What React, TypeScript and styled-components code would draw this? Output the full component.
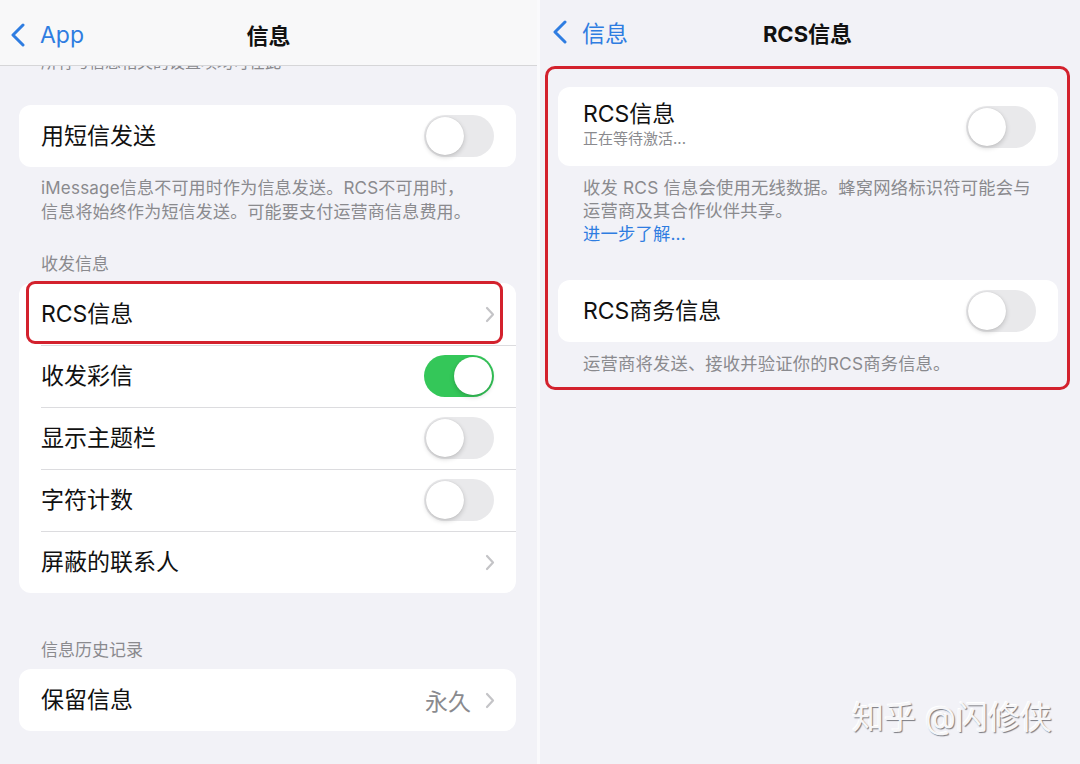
import React from 'react';
import styled, { createGlobalStyle } from 'styled-components';

const color = {
    bg: '#f2f2f7',
    card: '#ffffff',
    text: '#111111',
    gray: '#8a8a8e',
    blue: '#2f7de1',
    red: '#d3212d',
    green: '#34c759',
    track: '#e9e9eb',
    line: '#dcdcdf',
    chevron: '#c4c4c7',
};

const font = `"Inter", "Noto Sans CJK SC", "Noto Sans", sans-serif`;

const GlobalStyle = createGlobalStyle`
    html, body {
        margin: 0;
        padding: 0;
        background: ${color.bg};
        font-family: ${font};
    }
`;

function BackChevron() {
    return (
        <svg width="16" height="24" viewBox="0 0 16 24">
            <polyline
                points="13,2 3,12 13,22"
                fill="none"
                stroke={color.blue}
                strokeWidth="3"
                strokeLinecap="round"
                strokeLinejoin="round"
            />
        </svg>
    );
}

function Disclosure() {
    return (
        <svg width="10" height="17" viewBox="0 0 10 17">
            <polyline
                points="2,2 8,8.5 2,15"
                fill="none"
                stroke={color.chevron}
                strokeWidth="2.2"
                strokeLinecap="round"
                strokeLinejoin="round"
            />
        </svg>
    );
}

interface rowType {
    label: string;
    toggle?: boolean;
    on?: boolean;
    value?: string;
    marked?: boolean;
}

const messageRows: rowType[] = [
    { label: 'RCS信息', marked: true },
    { label: '收发彩信', toggle: true, on: true },
    { label: '显示主题栏', toggle: true },
    { label: '字符计数', toggle: true },
    { label: '屏蔽的联系人' },
];

function RowEnd({ row }: { row: rowType }) {
    if (row.toggle) {
        return (
            <Switch $on={!!row.on}>
                <Knob />
            </Switch>
        );
    }
    return (
        <Accessory>
            {row.value && <Value>{row.value}</Value>}
            <Disclosure />
        </Accessory>
    );
}

export default function App() {
    return (
        <>
            <GlobalStyle />
            <Screen>
                <LeftPanel>
                    <NavBar $bar>
                        <Back>
                            <BackChevron />
                            <BackText>App</BackText>
                        </Back>
                        <NavTitle $bar>信息</NavTitle>
                    </NavBar>
                    <PeekStrip>
                        <PeekText>所有与信息相关的设置项均可在此</PeekText>
                    </PeekStrip>

                    <Section $top={35}>
                        <Card>
                            <Row>
                                <Label>用短信发送</Label>
                                <Switch $on={false}>
                                    <Knob />
                                </Switch>
                            </Row>
                        </Card>
                        <Footer>
                            iMessage信息不可用时作为信息发送。RCS不可用时，
                            <br />
                            信息将始终作为短信发送。可能要支付运营商信息费用。
                        </Footer>
                    </Section>

                    <Section $top={26}>
                        <Header>收发信息</Header>
                        <Card>
                            {messageRows.map((row, i) => (
                                <Row key={i} $divider={i > 0}>
                                    <Label>{row.label}</Label>
                                    <RowEnd row={row} />
                                    {row.marked && <Mark />}
                                </Row>
                            ))}
                        </Card>
                    </Section>

                    <Section $top={43}>
                        <Header>信息历史记录</Header>
                        <Card>
                            <Row>
                                <Label>保留信息</Label>
                                <RowEnd row={{ label: '保留信息', value: '永久' }} />
                            </Row>
                        </Card>
                    </Section>
                </LeftPanel>

                <Split />

                <RightPanel>
                    <NavBar>
                        <Back>
                            <BackChevron />
                            <BackText>信息</BackText>
                        </Back>
                        <NavTitle>RCS信息</NavTitle>
                    </NavBar>

                    <Highlight>
                        <Card>
                            <TallRow>
                                <LabelStack>
                                    <Label>RCS信息</Label>
                                    <SubLabel>正在等待激活...</SubLabel>
                                </LabelStack>
                                <Switch $on={false}>
                                    <Knob />
                                </Switch>
                            </TallRow>
                        </Card>
                        <Footer $right>
                            收发 RCS 信息会使用无线数据。蜂窝网络标识符可能会与
                            <br />
                            运营商及其合作伙伴共享。
                            <br />
                            <Link>进一步了解...</Link>
                        </Footer>

                        <Card $gap={35}>
                            <Row $wide>
                                <Label>RCS商务信息</Label>
                                <Switch $on={false}>
                                    <Knob />
                                </Switch>
                            </Row>
                        </Card>
                        <Footer $right $tight>
                            运营商将发送、接收并验证你的RCS商务信息。
                        </Footer>
                    </Highlight>

                    <Watermark>知乎 @闪修侠</Watermark>
                </RightPanel>
            </Screen>
        </>
    );
}

const Screen = styled.div`
    width: 1080px;
    height: 764px;
    display: flex;
    overflow: hidden;
    background: ${color.bg};
`;

const LeftPanel = styled.div`
    width: 537px;
    display: flex;
    flex-direction: column;
    padding: 0 21px 0 19px;
    box-sizing: border-box;
    position: relative;
`;

const Split = styled.div`
    width: 3px;
    background: #fafafc;
`;

const RightPanel = styled.div`
    flex: 1;
    display: flex;
    flex-direction: column;
    padding: 0 10px 0 5px;
`;

const NavBar = styled.div<{ $bar?: boolean }>`
    height: ${({ $bar }) => ($bar ? '66px' : '64px')};
    box-sizing: border-box;
    margin: ${({ $bar }) => ($bar ? '0 -21px 0 -19px' : '0')};
    padding: ${({ $bar }) => ($bar ? '4px 0 0 10px' : '0 0 0 7px')};
    display: flex;
    align-items: center;
    position: relative;
    background: ${({ $bar }) => ($bar ? '#f8f8f9' : 'transparent')};
    border-bottom: ${({ $bar }) => ($bar ? '1px solid #d6d6d8' : 'none')};
`;

const Back = styled.div`
    display: flex;
    align-items: center;
    gap: 14px;
`;

const BackText = styled.span`
    font-size: 23px;
    color: ${color.blue};
`;

const NavTitle = styled.div<{ $bar?: boolean }>`
    position: absolute;
    inset: 0;
    padding-top: ${({ $bar }) => ($bar ? '3px' : '0')};
    display: flex;
    align-items: center;
    justify-content: center;
    font-size: 22px;
    font-weight: 700;
    color: ${color.text};
    pointer-events: none;
`;

const PeekStrip = styled.div`
    height: 4px;
    overflow: hidden;
    padding-left: 22px;
`;

const PeekText = styled.div`
    font-size: 16px;
    line-height: 16px;
    margin-top: -12px;
    color: ${color.gray};
`;

const Section = styled.div<{ $top: number }>`
    margin-top: ${({ $top }) => $top}px;
`;

const Header = styled.div`
    padding-left: 22px;
    height: 33px;
    font-size: 17px;
    color: ${color.gray};
`;

const Card = styled.div<{ $gap?: number }>`
    background: ${color.card};
    border-radius: 12px;
    margin-top: ${({ $gap }) => $gap ?? 0}px;
`;

const Row = styled.div<{ $divider?: boolean; $wide?: boolean }>`
    height: 62px;
    display: flex;
    align-items: center;
    justify-content: space-between;
    padding: 0 22px 0 ${({ $wide }) => ($wide ? 25 : 22)}px;
    position: relative;

    &::before {
        content: '';
        display: ${({ $divider }) => ($divider ? 'block' : 'none')};
        position: absolute;
        top: 0;
        left: 22px;
        right: 0;
        height: 1px;
        background: ${color.line};
    }
`;

const TallRow = styled(Row)`
    height: 79px;
    padding-left: 25px;
`;

const LabelStack = styled.div`
    display: flex;
    flex-direction: column;
    gap: 1px;
    margin-top: -4px;
`;

const Label = styled.span`
    font-size: 23px;
    color: ${color.text};
    line-height: 27px;
`;

const SubLabel = styled.span`
    font-size: 15px;
    color: ${color.gray};
    line-height: 20px;
`;

const Accessory = styled.div`
    display: flex;
    align-items: center;
    gap: 14px;
    margin-right: -1px;
`;

const Value = styled.span`
    font-size: 23px;
    color: ${color.gray};
`;

const Switch = styled.div<{ $on: boolean }>`
    width: 70px;
    height: 42px;
    border-radius: 21px;
    background: ${({ $on }) => ($on ? color.green : color.track)};
    display: flex;
    align-items: center;
    justify-content: ${({ $on }) => ($on ? 'flex-end' : 'flex-start')};
    padding: 0 2px;
    box-sizing: border-box;
`;

const Knob = styled.div`
    width: 38px;
    height: 38px;
    border-radius: 50%;
    background: #fff;
    box-shadow: 0 2px 5px rgba(0, 0, 0, 0.18), 0 0 1px rgba(0, 0, 0, 0.15);
`;

const Mark = styled.div`
    position: absolute;
    left: 7px;
    right: 13px;
    top: -2px;
    bottom: 1px;
    border: 3px solid ${color.red};
    border-radius: 9px;
    pointer-events: none;
`;

const Footer = styled.div<{ $right?: boolean; $tight?: boolean }>`
    padding: ${({ $right, $tight }) => ($tight ? '10px 0 12px 25px' : $right ? '10px 0 0 25px' : '9px 0 0 22px')};
    font-size: ${({ $right }) => ($right ? '17.3px' : '17px')};
    line-height: ${({ $right }) => ($right ? '23px' : '24px')};
    color: ${color.gray};
    letter-spacing: 0.2px;
`;

const Link = styled.span`
    color: ${color.blue};
`;

const Highlight = styled.div`
    margin-top: 2px;
    border: 3px solid ${color.red};
    border-radius: 10px;
    padding: 18px 9px 0 10px;
`;

const Watermark = styled.div`
    margin-top: auto;
    margin-bottom: 26px;
    align-self: flex-end;
    margin-right: 18px;
    font-size: 32px;
    color: #f6f6f8;
    text-shadow: 1px 1px 1px #7a7a80, -1px -1px 0 #ffffff;
`;
